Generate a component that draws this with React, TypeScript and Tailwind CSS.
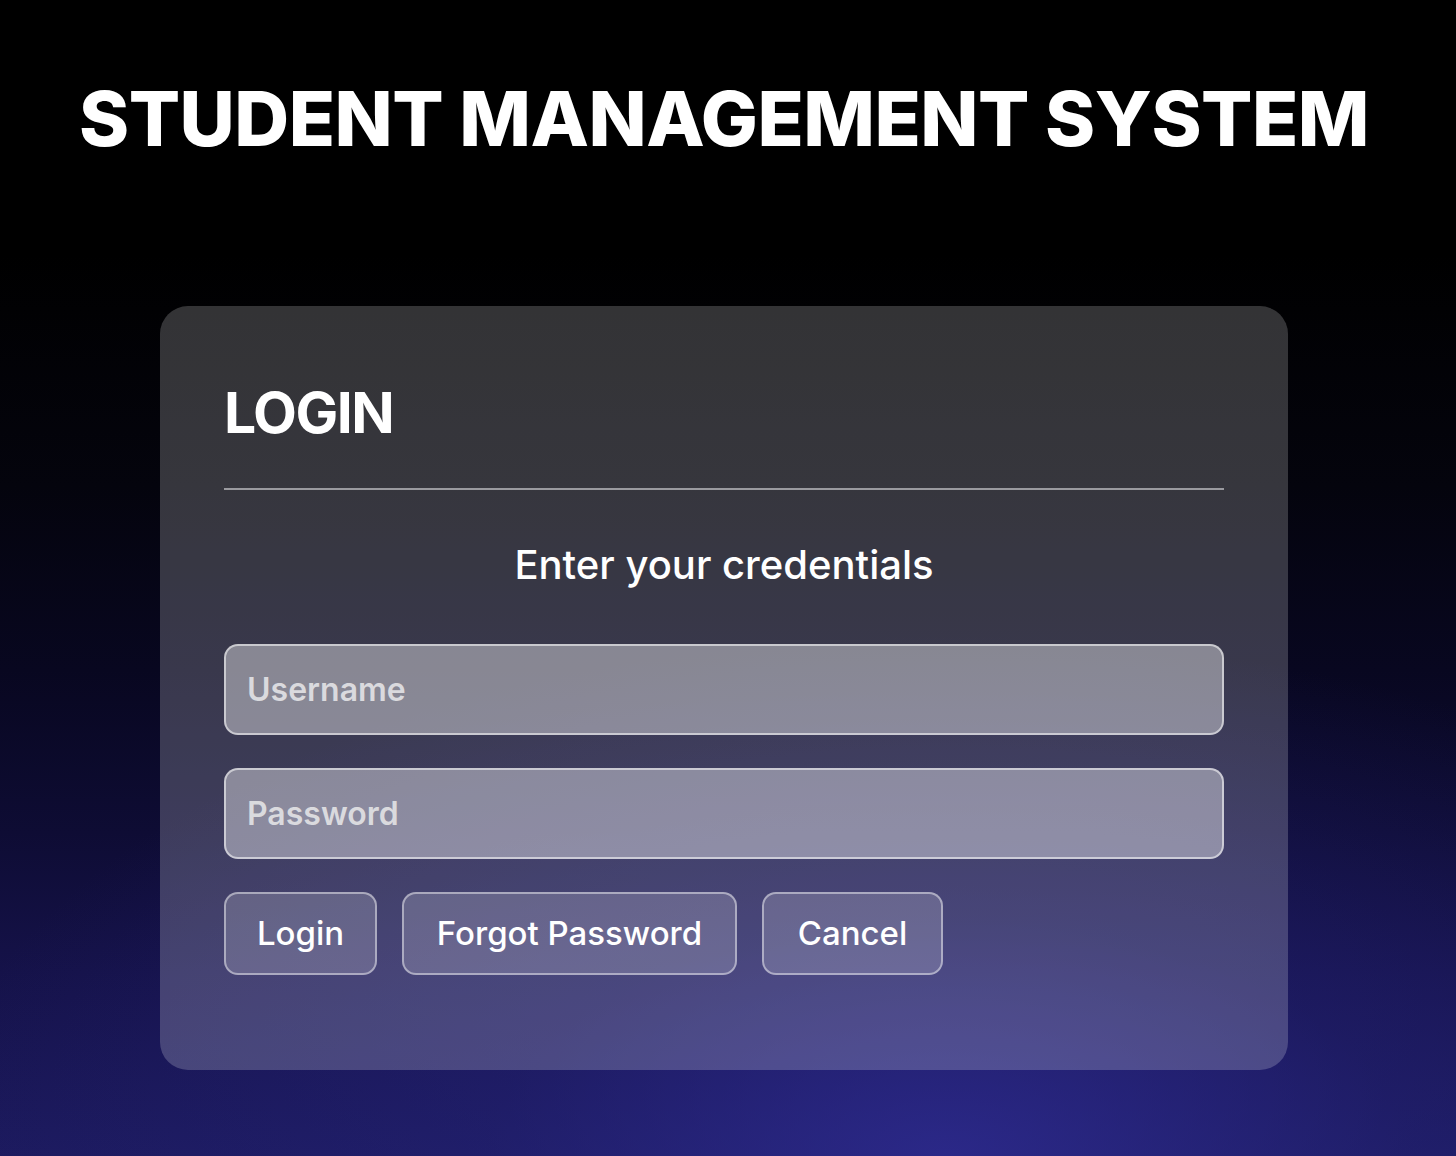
import React from "react";

export default function App() {
  return (
    <div
      className="relative w-full min-h-[1156px] overflow-hidden bg-[linear-gradient(180deg,#000000_0%,#000000_22%,#04040d_42%,#080720_58%,#0e0c34_72%,#151249_84%,#1c1a5e_100%)]"
      style={{ fontFamily: "Inter, 'Noto Sans', sans-serif" }}
    >
      <div className="pointer-events-none absolute inset-0 bg-[radial-gradient(ellipse_70%_45%_at_65%_100%,rgba(48,45,150,0.75)_0%,rgba(40,38,130,0.35)_45%,transparent_100%)]" />
      <div className="relative w-[1448px] flex flex-col items-center">
        <h1 className="mt-[70px] text-white font-extrabold text-[76px] leading-[96px] tracking-[-0.5px] whitespace-nowrap">
          STUDENT MANAGEMENT SYSTEM
        </h1>
        <div className="mt-[140px] w-[1128px] h-[764px] rounded-[28px] bg-[rgba(255,255,255,0.2)] px-[64px] pt-[72px]">
          <h2 className="text-white font-bold text-[57px] leading-[70px] tracking-[-1.5px]">LOGIN</h2>
          <div className="mt-[40px] h-[2px] w-full bg-[#9a9a9f]" />
          <p className="mt-[50px] text-center text-white font-medium text-[40px] leading-[50px]">
            Enter your credentials
          </p>
          <div className="mt-[54px] flex flex-col gap-[33px]">
            <input
              placeholder="Username"
              className="h-[91px] w-full rounded-[14px] border-2 border-[rgba(255,255,255,0.55)] bg-[rgba(255,255,255,0.4)] px-[21px] text-[32px] font-semibold text-white placeholder:text-[#dadade] outline-none"
            />
            <input
              placeholder="Password"
              type="password"
              className="h-[91px] w-full rounded-[14px] border-2 border-[rgba(255,255,255,0.55)] bg-[rgba(255,255,255,0.4)] px-[21px] text-[32px] font-semibold text-white placeholder:text-[#dadade] outline-none"
            />
          </div>
          <div className="mt-[33px] flex gap-[25px]">
            <button className="h-[83px] w-[153px] rounded-[14px] border-2 border-[rgba(255,255,255,0.45)] bg-[rgba(255,255,255,0.18)] text-white text-[33px] font-medium">
              Login
            </button>
            <button className="h-[83px] w-[335px] rounded-[14px] border-2 border-[rgba(255,255,255,0.45)] bg-[rgba(255,255,255,0.18)] text-white text-[33px] font-medium">
              Forgot Password
            </button>
            <button className="h-[83px] w-[181px] rounded-[14px] border-2 border-[rgba(255,255,255,0.45)] bg-[rgba(255,255,255,0.18)] text-white text-[33px] font-medium">
              Cancel
            </button>
          </div>
        </div>
      </div>
    </div>
  );
}
